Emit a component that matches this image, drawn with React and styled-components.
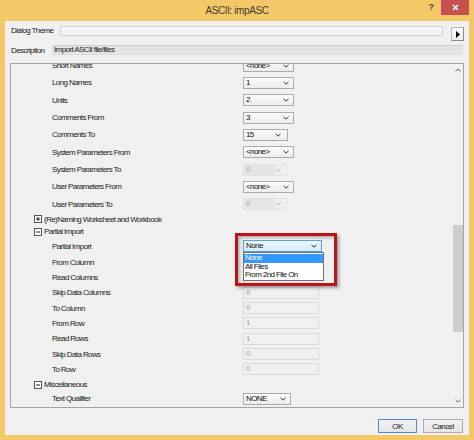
import React from "react";
import styled, { createGlobalStyle } from "styled-components";

const GlobalStyle = createGlobalStyle`
  html, body {
    margin: 0;
    padding: 0;
    background: #f4c867;
  }
  body {
    font-family: "Liberation Sans", Arial, sans-serif;
    font-size: 8px;
    letter-spacing: -0.6px;
    color: #1a1a1a;
  }
`;

const Window = styled.div`
  width: 474px;
  height: 440px;
  background: #f4c867;
  display: flex;
  flex-direction: column;
  box-sizing: border-box;
  overflow: hidden;
`;

const TitleBar = styled.div`
  height: 21px;
  display: grid;
  grid-template-columns: 1fr auto 1fr;
  align-items: start;
`;

const Title = styled.div`
  grid-column: 2;
  font-size: 10px;
  letter-spacing: -0.4px;
  line-height: 21px;
  color: #3b3b3b;
`;

const Caption = styled.div`
  grid-column: 3;
  display: flex;
  justify-content: flex-end;
  align-items: flex-start;
  padding-right: 5px;
`;

const Help = styled.span`
  font-size: 9px;
  font-weight: bold;
  color: #4a4a4a;
  line-height: 15px;
  margin-right: 7px;
  letter-spacing: 0;
`;

const CloseBtn = styled.div`
  width: 28px;
  height: 15px;
  background: #c75050;
  color: #fff;
  display: flex;
  align-items: center;
  justify-content: center;
`;

const Client = styled.div`
  flex: 1;
  margin: 0 5px 5px 5px;
  background: #f0f0f0;
  padding: 0 5px 2px 5px;
  display: flex;
  flex-direction: column;
`;

const ThemeRow = styled.div`
  margin-top: 4px;
  height: 16px;
  display: flex;
  align-items: flex-start;
`;

const FieldLabel = styled.div`
  width: ${(p) => p.$w}px;
  padding-left: 1px;
  box-sizing: border-box;
  line-height: 9px;
  margin-top: ${(p) => p.$top || 0}px;
  white-space: nowrap;
`;

const ThemeField = styled.div`
  flex: 1;
  height: 10px;
  margin-top: 1px;
  box-sizing: border-box;
  border: 1px solid #d2d2d2;
  background: #f4f4f4;
`;

const ArrowBtn = styled.div`
  width: 13px;
  height: 14px;
  margin-top: 2px;
  margin-left: 8px;
  box-sizing: border-box;
  border: 1px solid #b9b9b9;
  border-right-color: #8a8a8a;
  border-bottom-color: #8a8a8a;
  background: linear-gradient(#fdfdfd, #ececec);
  display: flex;
  align-items: center;
  justify-content: center;
`;

const DescRow = styled.div`
  margin-top: 4px;
  height: 10px;
  display: flex;
  align-items: center;
`;

const DescField = styled.div`
  flex: 1;
  height: 10px;
  margin-right: 1px;
  box-sizing: border-box;
  border: 1px solid #dedede;
  border-top-color: #cfcfcf;
  background: #e4e4e4;
  line-height: 8px;
  padding-left: 1px;
  white-space: nowrap;
`;

const Panel = styled.div`
  margin-top: 8px;
  height: 345px;
  box-sizing: border-box;
  border: 1px solid #a3a3a3;
  display: flex;
  background: #f0f0f0;
`;

const Tree = styled.div`
  flex: 1;
  overflow: hidden;
  position: relative;
`;

const TreeContent = styled.div`
  margin-top: -7px;
`;

const Row = styled.div`
  height: ${(p) => p.$h}px;
  display: grid;
  grid-template-columns: 232px 1fr;
  align-items: center;
  position: relative;
  z-index: ${(p) => (p.$top ? 5 : 1)};
`;

const RowLabel = styled.div`
  padding-left: 41px;
  white-space: nowrap;
  line-height: 9px;
`;

const GroupLabel = styled.div`
  grid-column: 1 / 3;
  padding-left: 23px;
  display: flex;
  align-items: center;
  gap: 2px;
  white-space: nowrap;
  line-height: 9px;
`;

const Combo = styled.div`
  position: relative;
  width: ${(p) => p.$w}px;
  height: 12px;
  box-sizing: border-box;
  border: 1px solid ${(p) => (p.$disabled ? "#e2e2e2" : p.$focus ? "#5a9fe6" : "#acacac")};
  background: ${(p) =>
    p.$disabled
      ? "#efefef"
      : p.$focus
      ? "linear-gradient(#eef6fd, #d9ebfb)"
      : "linear-gradient(#fbfbfb, #ededed)"};
  display: flex;
  align-items: center;
  color: ${(p) => (p.$disabled ? "#a5a5a5" : "#111")};
`;

const ComboText = styled.div`
  height: 100%;
  padding-left: 2px;
  line-height: 10px;
  white-space: nowrap;
  width: ${(p) => (p.$disabled ? "29px" : "auto")};
  background: ${(p) => (p.$disabled ? "#e5e5e5" : "transparent")};
`;

const ChevronSlot = styled.div`
  margin-left: auto;
  margin-right: ${(p) => p.$mr || 4}px;
  display: flex;
  align-items: center;
`;

const TextBox = styled.div`
  width: 76px;
  height: 12px;
  box-sizing: border-box;
  border: 1px solid #dadada;
  background: #f0f0f0;
  color: #a3a3a3;
  line-height: 10px;
  padding-left: 2px;
`;

const DropList = styled.div`
  position: absolute;
  top: 11px;
  left: -1px;
  width: 81px;
  box-sizing: border-box;
  border: 1px solid #6f6f6f;
  background: #fff;
  padding: 1px 0;
  z-index: 6;
`;

const DropItem = styled.div`
  height: 8.4px;
  line-height: 8.4px;
  padding-left: 1px;
  white-space: nowrap;
  color: ${(p) => (p.$sel ? "#fff" : "#111")};
  background: ${(p) => (p.$sel ? "#3399ff" : "transparent")};
`;

const Highlight = styled.div`
  position: absolute;
  left: -9px;
  top: -8px;
  width: 102px;
  height: 53px;
  box-sizing: border-box;
  border: 3px solid #b8141c;
  box-shadow: 2px 2px 3px rgba(0, 0, 0, 0.35), inset 2px 2px 3px rgba(0, 0, 0, 0.25);
  pointer-events: none;
  z-index: 7;
`;

const ScrollBar = styled.div`
  width: 10px;
  display: flex;
  flex-direction: column;
  background: #f0f0f0;
`;

const ScrollArrow = styled.div`
  height: 12px;
  display: flex;
  align-items: center;
  justify-content: center;
`;

const ScrollTrack = styled.div`
  flex: 1;
`;

const Thumb = styled.div`
  margin-top: 149px;
  height: 107px;
  background: #cdcdcd;
`;

const Footer = styled.div`
  margin-top: 11px;
  display: flex;
  justify-content: flex-end;
  gap: 6px;
  padding-right: 1px;
`;

const Button = styled.div`
  width: ${(p) => p.$w}px;
  height: 14px;
  box-sizing: border-box;
  border: 1px solid ${(p) => (p.$default ? "#4a8fd4" : "#acacac")};
  background: linear-gradient(#f2f2f2, #e5e5e5);
  display: flex;
  align-items: center;
  justify-content: center;
  color: #222;
`;

const Chevron = ({ color = "#333", up }) => (
  <svg width="6" height="4" viewBox="0 0 6 4">
    <path
      d={up ? "M0.5 3.5 L3 1 L5.5 3.5" : "M0.5 0.8 L3 3.2 L5.5 0.8"}
      fill="none"
      stroke={color}
      strokeWidth="1"
    />
  </svg>
);

const ExpandBox = ({ open }) => (
  <svg width="8" height="8" viewBox="0 0 8 8">
    <rect x="0.5" y="0.5" width="7" height="7" fill="#fff" stroke="#555" />
    <path d="M2 4 H6" stroke="#222" />
    {!open && <path d="M4 2 V6" stroke="#222" />}
  </svg>
);

const combo = (value, w = 51) => ({ type: "combo", value, w });
const off = (value) => ({ type: "off", value });
const box = (value) => ({ type: "text", value });

const R = 17.33;
const T = 15.34;

// From Column / Read Columns sit under the open list, so their values are not shown
const rows = [
  { label: "Short Names", h: R, ctl: combo("<none>") },
  { label: "Long Names", h: R, ctl: combo("1") },
  { label: "Units", h: R, ctl: combo("2") },
  { label: "Comments From", h: R, ctl: combo("3") },
  { label: "Comments To", h: R, ctl: { type: "combo", value: "15", w: 45, mr: 6 } },
  { label: "System Parameters From", h: R, ctl: combo("<none>") },
  { label: "System Parameters To", h: R, ctl: off("0") },
  { label: "User Parameters From", h: R, ctl: combo("<none>") },
  { label: "User Parameters To", h: R, ctl: off("0") },
  { group: "(Re)Naming Worksheet and Workbook", open: false, h: 13 },
  { group: "Partial Import", open: true, h: 12 },
  { label: "Partial Import", h: 16.5, ctl: { type: "open" } },
  { label: "From Column", h: T, ctl: box("") },
  { label: "Read Columns", h: T, ctl: box("") },
  { label: "Skip Data Columns", h: T, ctl: box("0") },
  { label: "To Column", h: T, ctl: box("0") },
  { label: "From Row", h: T, ctl: box("1") },
  { label: "Read Rows", h: T, ctl: box("1") },
  { label: "Skip Data Rows", h: T, ctl: box("0") },
  { label: "To Row", h: T, ctl: box("0") },
  { group: "Miscellaneous", open: true, h: 15.3 },
  { label: "Text Qualifier", h: 13, ctl: combo("NONE", 48) },
];

const options = ["None", "All Files", "From 2nd File On"];

function Control({ ctl }) {
  if (ctl.type === "text") return <TextBox>{ctl.value}</TextBox>;
  if (ctl.type === "off")
    return (
      <Combo $w={44} $disabled>
        <ComboText $disabled>{ctl.value}</ComboText>
        <ChevronSlot $mr={5}>
          <Chevron color="#b5b5b5" />
        </ChevronSlot>
      </Combo>
    );
  if (ctl.type === "open")
    return (
      <Combo $w={79} $focus>
        <ComboText>None</ComboText>
        <ChevronSlot $mr={4}>
          <Chevron color="#222" />
        </ChevronSlot>
        <DropList>
          {options.map((o, i) => (
            <DropItem key={o} $sel={i === 0}>
              {o}
            </DropItem>
          ))}
        </DropList>
        <Highlight />
      </Combo>
    );
  return (
    <Combo $w={ctl.w}>
      <ComboText>{ctl.value}</ComboText>
      <ChevronSlot $mr={ctl.mr}>
        <Chevron />
      </ChevronSlot>
    </Combo>
  );
}

export default function App() {
  return (
    <>
      <GlobalStyle />
      <Window>
        <TitleBar>
          <Title>ASCII: impASC</Title>
          <Caption>
            <Help>?</Help>
            <CloseBtn>
              <svg width="7" height="7" viewBox="0 0 7 7">
                <path d="M1 1 L6 6 M6 1 L1 6" stroke="#fff" strokeWidth="1.4" />
              </svg>
            </CloseBtn>
          </Caption>
        </TitleBar>
        <Client>
          <ThemeRow>
            <FieldLabel $w={50} $top={0.5}>
              Dialog Theme
            </FieldLabel>
            <ThemeField />
            <ArrowBtn>
              <svg width="4" height="7" viewBox="0 0 4 7">
                <path d="M0 0 L4 3.5 L0 7 Z" fill="#000" />
              </svg>
            </ArrowBtn>
          </ThemeRow>
          <DescRow>
            <FieldLabel $w={42}>Description</FieldLabel>
            <DescField>Import ASCII file/files</DescField>
          </DescRow>
          <Panel>
            <Tree>
              <TreeContent>
                {rows.map((r, i) =>
                  r.group ? (
                    <Row key={i} $h={r.h}>
                      <GroupLabel>
                        <ExpandBox open={r.open} />
                        {r.group}
                      </GroupLabel>
                    </Row>
                  ) : (
                    <Row key={i} $h={r.h} $top={r.ctl.type === "open"}>
                      <RowLabel>{r.label}</RowLabel>
                      <div>
                        <Control ctl={r.ctl} />
                      </div>
                    </Row>
                  )
                )}
              </TreeContent>
            </Tree>
            <ScrollBar>
              <ScrollArrow>
                <Chevron up color="#606060" />
              </ScrollArrow>
              <ScrollTrack>
                <Thumb />
              </ScrollTrack>
              <ScrollArrow>
                <Chevron color="#606060" />
              </ScrollArrow>
            </ScrollBar>
          </Panel>
          <Footer>
            <Button $w={39} $default>
              OK
            </Button>
            <Button $w={40}>Cancel</Button>
          </Footer>
        </Client>
      </Window>
    </>
  );
}
